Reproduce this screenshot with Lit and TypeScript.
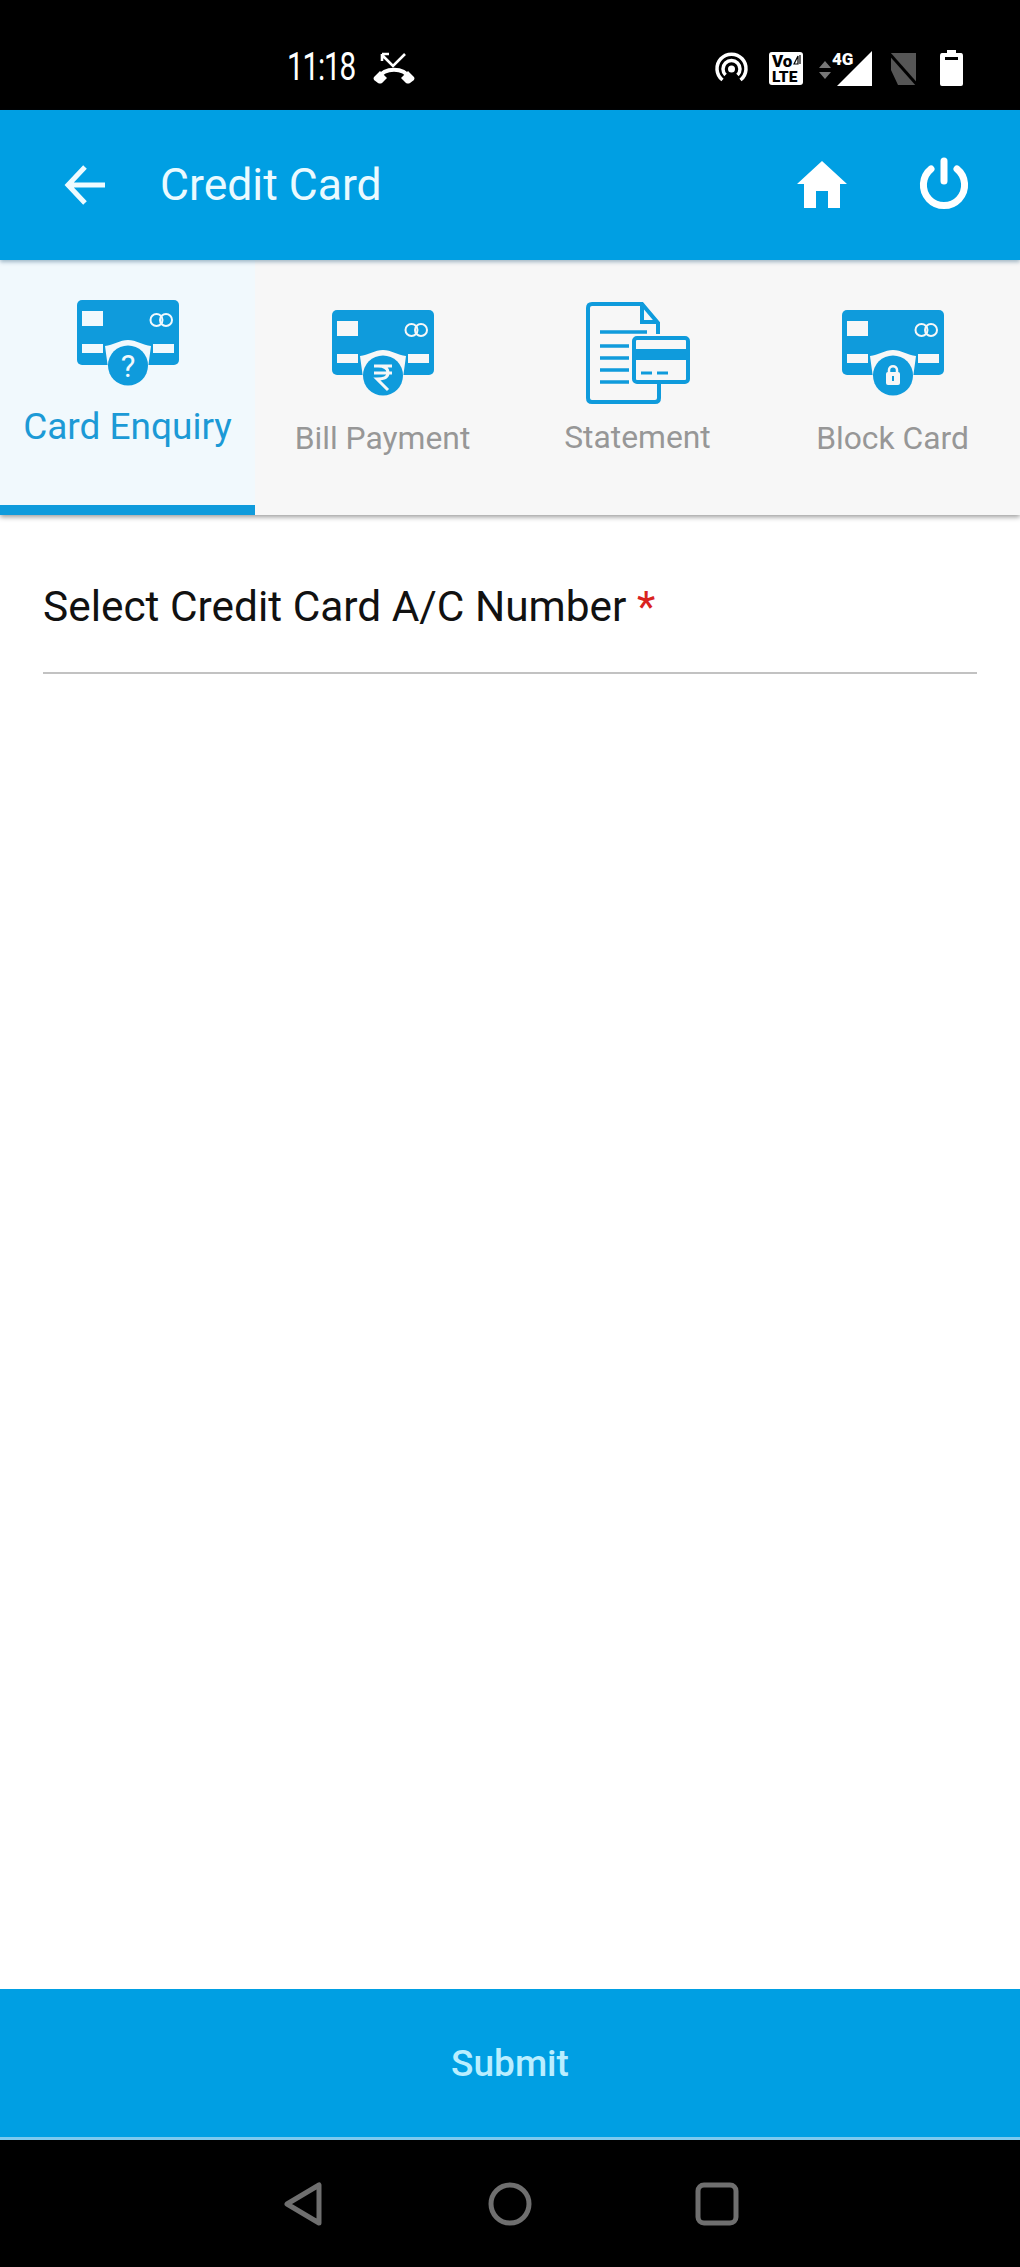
import { LitElement, html, css, svg } from "lit";
import { customElement } from "lit/decorators.js";

const cardIcon = (overlay: unknown) => html`<svg class="card" viewBox="0 0 102 86" width="102" height="86">
  <rect class="ink" x="0" y="0" width="102" height="65" rx="5"></rect>
  <rect class="hole" x="5" y="11" width="21" height="15"></rect>
  <rect class="hole" x="5" y="44" width="21" height="9"></rect>
  <rect class="hole" x="76" y="44" width="21" height="9"></rect>
  <g fill="none" class="ring">
    <circle cx="79.500" cy="20" r="6"></circle>
    <circle cx="89" cy="20" r="6"></circle>
  </g>
  <path class="hole" d="M28 46 L31 68 L71 68 L74 46 C66 45 59 40 51 40 C43 40 36 45 28 46 Z"></path>
  <circle class="ink" cx="51" cy="65.500" r="20"></circle>
  ${overlay}
</svg>`;

const question = svg`<text class="glyph" x="51" y="77" text-anchor="middle">?</text>`;
const rupee = svg`<path class="glyphline" d="M42 56 H60 M42 63 H60 M46 56 C55 56 56 60 56 63 C56 67 52 69 45 69 L56 80"></path>`;
const lock = svg`<path class="glyphline thin" d="M47 63 V60 C47 55 55 55 55 60 V63"></path>
  <rect class="hole" x="44" y="62" width="14" height="13" rx="2"></rect>
  <rect class="ink" x="50" y="66" width="2" height="5"></rect>`;

@customElement("app-root")
export class AppRoot extends LitElement {
  static styles = css`
    :host {
      display: flex;
      flex-direction: column;
      width: 1020px;
      height: 2267px;
      background: #fff;
      font-family: Roboto, "Liberation Sans", sans-serif;
      overflow: hidden;
    }
    .status {
      height: 110px;
      flex: none;
      background: #000;
      display: flex;
      align-items: flex-start;
      color: #fff;
    }
    .time {
      margin: 46px 0 0 287px;
      width: 66px;
      font-size: 38px;
      line-height: 42px;
      font-weight: 400;
      letter-spacing: -1.500px;
      white-space: nowrap;
      transform: scaleX(0.78);
      transform-origin: left center;
    }
    .missed { margin: 52px 0 0 20px; }
    .sysicons { margin: 48px 49px 0 auto; }
    .sys-text { font-family: Roboto, sans-serif; font-weight: 900; }
    .header {
      height: 150px;
      flex: none;
      background: #009fe3;
      color: #eafaff;
      display: flex;
      align-items: center;
      position: relative;
      z-index: 2;
      box-shadow: 0 2px 4px rgba(0, 60, 100, 0.35);
    }
    .back { margin-left: 64px; }
    .title {
      margin-left: 54px;
      font-size: 44.500px;
      line-height: 52px;
      flex: 1;
    }
    .home { margin-right: 72px; margin-top: -2px; }
    .power { margin-right: 51px; margin-top: -4px; }
    .tabs {
      height: 255px;
      flex: none;
      display: grid;
      grid-template-columns: repeat(4, 255px);
      background: #f7f7f7;
      position: relative;
      z-index: 1;
      box-shadow: 0 2px 5px rgba(0, 0, 0, 0.4);
    }
    .tab {
      --tab-bg: #f7f7f7;
      display: flex;
      flex-direction: column;
      align-items: center;
      padding-top: 50px;
      color: #979797;
      font-size: 31.800px;
      line-height: 36px;
      box-sizing: border-box;
      white-space: nowrap;
    }
    .tab.active {
      --tab-bg: #f1f9fd;
      background: #f1f9fd;
      border-bottom: 10px solid #0f9bdc;
      padding-top: 40px;
      color: #1c9ad6;
      font-size: 37px;
    }
    .label-gap { margin-top: 24px; }
    .tab.active .label-gap { margin-top: 23px; }
    .tab.plain { padding-top: 41px; }
    .tab.plain .label-gap { margin-top: 14px; }
    .card .ink { fill: #0f9bdc; }
    .card .hole { fill: var(--tab-bg); }
    .card .ring { stroke: var(--tab-bg); stroke-width: 2; }
    .glyph {
      fill: var(--tab-bg);
      font-size: 31px;
      font-weight: 400;
      font-family: Roboto, sans-serif;
    }
    .glyphline {
      fill: none;
      stroke: var(--tab-bg);
      stroke-width: 3;
    }
    .glyphline.thin { stroke-width: 2.500; }
    .main {
      flex: 1;
      padding: 67px 43px 0;
    }
    .field {
      border-bottom: 2px solid #c2c2c2;
      height: 90px;
      font-size: 42.400px;
      line-height: 50px;
      color: #111;
      white-space: nowrap;
    }
    .req { color: #d9231f; }
    .submit {
      height: 148px;
      flex: none;
      background: #009fe3;
      color: #b9eeff;
      display: flex;
      align-items: center;
      justify-content: center;
      font-size: 37px;
      font-weight: 500;
      border-bottom: 3px solid #7cc9ee;
    }
    .nav {
      height: 127px;
      flex: none;
      background: #000;
      display: flex;
      align-items: flex-start;
      justify-content: center;
      gap: 163px;
      padding-top: 42px;
      box-sizing: border-box;
    }
    .nav svg { fill: none; stroke: #6f6f6f; stroke-width: 5; stroke-linejoin: round; }
  `;

  render() {
    return html`
      <div class="status">
        <div class="time">11:18</div>
        <svg class="missed" width="42" height="32" viewBox="0 0 42 32">
          <path fill="none" stroke="#fff" stroke-width="4" d="M5 26 C12 15 30 15 37 26"></path>
          <path fill="#fff" d="M1 25 L7 19 L14 26 L9 31 Q7 32 5 31 L1 28 Q0 26 1 25 Z M41 25 L35 19 L28 26 L33 31 Q35 32 37 31 L41 28 Q42 26 41 25 Z"></path>
          <path fill="none" stroke="#fff" stroke-width="2.600" d="M9 3 L20 14 L32 2 M9 2 H16 M9 2 V9"></path>
        </svg>
        <svg class="sysicons" width="257" height="42" viewBox="0 0 257 42">
          <g fill="none" stroke="#fff" stroke-width="3.500">
            <path d="M8.500 32 A14.500 14.500 0 1 1 26.500 32"></path>
            <path d="M11.500 27 A8.500 8.500 0 1 1 23.500 27"></path>
          </g>
          <circle cx="17.500" cy="21" r="3.500" fill="#fff"></circle>
          <rect x="55" y="4" width="34" height="33" rx="3" fill="#fff"></rect>
          <text class="sys-text" x="58" y="19" font-size="17" fill="#000">Vo</text>
          <path d="M80 16 L84 8 V16 Z M86 7 V16" fill="none" stroke="#000" stroke-width="1.200"></path>
          <text class="sys-text" x="58" y="34" font-size="15.500" fill="#000">LTE</text>
          <path fill="#777" d="M105 20 L111 13 L117 20 Z M105 24 L117 24 L111 31 Z"></path>
          <text class="sys-text" x="118" y="17" font-size="17" fill="#fff">4G</text>
          <path fill="#fff" d="M123 38 L158 3 V38 Z"></path>
          <path fill="#565656" d="M177 5 H202 V37 H184 L177 22 Z"></path>
          <path fill="none" stroke="#000" stroke-width="3" d="M174 4 L205 39"></path>
          <path fill="#fff" d="M233 2 H242 V5 H247 Q249 5 249 8 V36 Q249 38 247 38 H228 Q226 38 226 36 V8 Q226 5 228 5 H233 Z"></path>
          <rect x="231" y="9" width="13" height="3" fill="#000"></rect>
        </svg>
      </div>
      <div class="header">
        <svg class="back" width="42" height="40" viewBox="0 0 42 40" fill="none" stroke="#eefbff" stroke-width="5">
          <path d="M41 20 H4 M21 2 L4 20 L21 38"></path>
        </svg>
        <div class="title">Credit Card</div>
        <svg class="home" width="50" height="48" viewBox="0 0 50 48">
          <path fill="#fff" d="M25 1 L50 24 H43 V48 H31 V31 H19 V48 H7 V24 H0 Z"></path>
        </svg>
        <svg class="power" width="50" height="54" viewBox="0 0 50 54" fill="none" stroke="#fff" stroke-width="7" stroke-linecap="round">
          <path d="M12 13 A20.600 20.600 0 1 0 38 13"></path>
          <path d="M25 5 V25"></path>
        </svg>
      </div>
      <div class="tabs">
        <div class="tab active">
          ${cardIcon(question)}
          <div class="label-gap">Card Enquiry</div>
        </div>
        <div class="tab">
          ${cardIcon(rupee)}
          <div class="label-gap">Bill Payment</div>
        </div>
        <div class="tab plain">
          <svg width="104" height="104" viewBox="0 0 104 104" fill="none" stroke="#0f9bdc" stroke-width="4">
            <path d="M72 33 V22 L56 3 H6 Q2 3 2 7 V97 Q2 101 6 101 H69 Q73 101 73 97 V83"></path>
            <path d="M56 3 V21 H72"></path>
            <path d="M14 31 H61 M14 45 H43 M14 57 H43 M14 69 H43 M14 81 H43" stroke-width="3.500"></path>
            <rect x="48" y="37" width="54" height="44" rx="3"></rect>
            <rect x="48" y="48" width="54" height="11" fill="#0f9bdc" stroke="none"></rect>
            <path d="M55 72 H66 M71 72 H82" stroke-width="3"></path>
          </svg>
          <div class="label-gap">Statement</div>
        </div>
        <div class="tab">
          ${cardIcon(lock)}
          <div class="label-gap">Block Card</div>
        </div>
      </div>
      <div class="main">
        <div class="field">Select Credit Card A/C Number <span class="req">*</span></div>
      </div>
      <div class="submit">Submit</div>
      <div class="nav">
        <svg width="44" height="44" viewBox="0 0 44 44"><path d="M38 3 V41 L6 22 Z"></path></svg>
        <svg width="44" height="44" viewBox="0 0 44 44"><circle cx="22" cy="22" r="19"></circle></svg>
        <svg width="44" height="44" viewBox="0 0 44 44"><rect x="3" y="3" width="38" height="38" rx="6"></rect></svg>
      </div>
    `;
  }
}
